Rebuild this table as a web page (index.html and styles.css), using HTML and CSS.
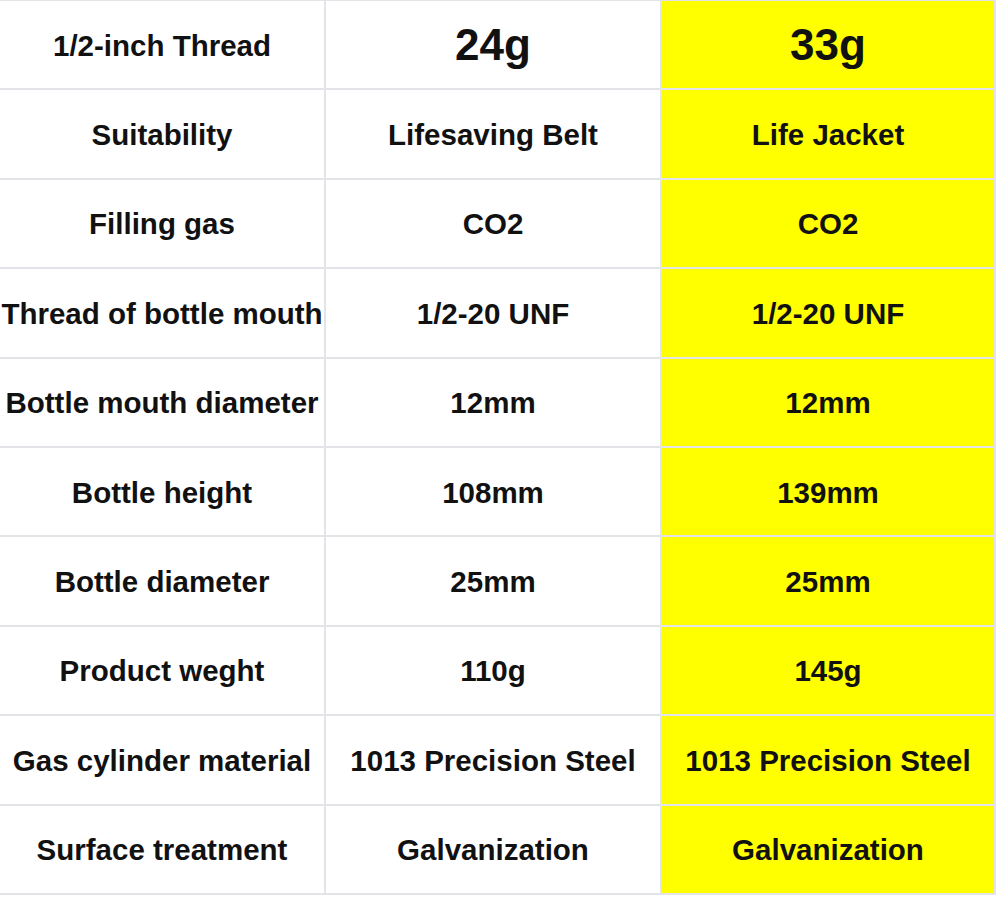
FILE: index.html
```html
<!DOCTYPE html>
<html>
<head>
<meta charset="utf-8">
<link rel="stylesheet" href="styles.css">
</head>
<body>
<div class="table">
  <div class="cell">1/2-inch Thread</div>
  <div class="cell big">24g</div>
  <div class="cell big hl">33g</div>

  <div class="cell">Suitability</div>
  <div class="cell">Lifesaving Belt</div>
  <div class="cell hl">Life Jacket</div>

  <div class="cell">Filling gas</div>
  <div class="cell">CO2</div>
  <div class="cell hl">CO2</div>

  <div class="cell">Thread of bottle mouth</div>
  <div class="cell">1/2-20 UNF</div>
  <div class="cell hl">1/2-20 UNF</div>

  <div class="cell">Bottle mouth diameter</div>
  <div class="cell">12mm</div>
  <div class="cell hl">12mm</div>

  <div class="cell">Bottle height</div>
  <div class="cell">108mm</div>
  <div class="cell hl">139mm</div>

  <div class="cell">Bottle diameter</div>
  <div class="cell">25mm</div>
  <div class="cell hl">25mm</div>

  <div class="cell">Product weght</div>
  <div class="cell">110g</div>
  <div class="cell hl">145g</div>

  <div class="cell">Gas cylinder material</div>
  <div class="cell">1013 Precision Steel</div>
  <div class="cell hl">1013 Precision Steel</div>

  <div class="cell">Surface treatment</div>
  <div class="cell">Galvanization</div>
  <div class="cell hl">Galvanization</div>
</div>
</body>
</html>
```

FILE: styles.css
```css
html, body {
  margin: 0;
  padding: 0;
  background: #ffffff;
}

.table {
  width: 994px;
  display: grid;
  grid-template-columns: 324px 334px 332px;
  grid-auto-rows: 87.4px;
  gap: 2px;
  padding: 1px 2px 2px 0;
  background: #e2e4e8;
  font-family: "Liberation Sans", Arial, sans-serif;
  font-weight: bold;
  font-size: 29.5px;
  color: #111111;
}

.cell {
  background: #ffffff;
  display: flex;
  align-items: center;
  justify-content: center;
  white-space: nowrap;
  padding-top: 2px;
  box-sizing: border-box;
}

.cell.hl {
  background: #ffff00;
}

.cell.big {
  font-size: 44px;
  padding-top: 0;
}
```
